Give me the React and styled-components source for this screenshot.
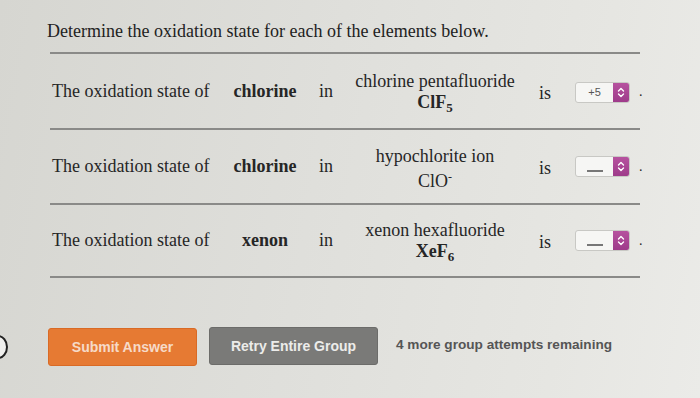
import styled, { createGlobalStyle } from "styled-components";

const GlobalStyle = createGlobalStyle`
  html, body {
    margin: 0;
    padding: 0;
  }
  body {
    width: 700px;
    height: 398px;
    overflow: hidden;
    background: linear-gradient(100deg, #d6d6d1 0%, #dfdfdb 45%, #e6e6e2 80%, #ebebe8 100%);
    font-family: "Liberation Serif", "Times New Roman", serif;
    color: #262626;
  }
`;

const Page = styled.div`
  position: relative;
  height: 398px;
  padding: 20px 0 0 47px;
  box-sizing: border-box;
`;

const Heading = styled.div`
  font-size: 18px;
  line-height: 22px;
  color: #222;
  padding-bottom: 10px;
`;

const Rule = styled.div`
  width: 590px;
  height: 2px;
  margin-left: 3px;
  background: #8a8a88;
`;

const Row = styled.div`
  display: grid;
  grid-template-columns: 166px 94px 28px 190px 30px auto;
  align-items: center;
  height: ${(p) => p.h || 74}px;
  padding-left: 5px;
  font-size: 18px;
`;

const Cell = styled.div`
  text-align: ${(p) => (p.left ? "left" : "center")};
  font-weight: ${(p) => (p.bold ? 700 : 400)};
  transform: translateY(${(p) => p.dy || 0}px);
`;

const Compound = styled.div`
  text-align: center;
  line-height: 21px;
  transform: translateY(${(p) => p.dy || 0}px);
`;

const Formula = styled.div`
  font-weight: ${(p) => (p.bold ? 700 : 400)};
  margin-top: ${(p) => p.gap || 0}px;
`;

const Sub = styled.sub`
  font-size: 13px;
  vertical-align: -4px;
  line-height: 0;
`;

const Sup = styled.sup`
  font-size: 12px;
  vertical-align: 6px;
  line-height: 0;
`;

const SelectWrap = styled.div`
  display: flex;
  align-items: center;
  margin-left: 15px;
  transform: translateY(${(p) => p.dy || 0}px);
`;

const Select = styled.div`
  display: flex;
  width: 53px;
  height: 19px;
  border: 1px solid #c8c8c4;
  border-radius: 3px;
  background: #f6f6f4;
  overflow: hidden;
`;

const SelectValue = styled.div`
  flex: 1;
  display: flex;
  align-items: center;
  justify-content: center;
  font-family: "Liberation Sans", Arial, sans-serif;
  font-size: 11px;
  color: #555;
`;

const Blank = styled.div`
  width: 16px;
  height: 2px;
  background: #777;
  margin-top: 8px;
`;

const Arrows = styled.div`
  width: 16px;
  display: flex;
  align-items: center;
  justify-content: center;
  background: linear-gradient(#b6529f, #9e3b8a);
`;

const Period = styled.span`
  margin-left: 9px;
  font-size: 14px;
`;

const Actions = styled.div`
  display: flex;
  align-items: center;
  margin-top: 50px;
  margin-left: 1px;
`;

const Button = styled.div`
  width: ${(p) => p.w}px;
  height: 38px;
  box-sizing: border-box;
  display: flex;
  align-items: center;
  justify-content: center;
  border-radius: 3px;
  font-family: "Liberation Sans", Arial, sans-serif;
  font-weight: 700;
  font-size: 14px;
  background: ${(p) => p.bg};
  color: ${(p) => p.fg};
  border: 1px solid ${(p) => p.edge};
  margin-right: 12px;
  transform: translateY(${(p) => p.dy || 0}px);
`;

const Remaining = styled.div`
  margin-left: 6px;
  font-family: "Liberation Sans", Arial, sans-serif;
  font-weight: 700;
  font-size: 13.6px;
  color: #555;
  transform: translateY(-3px);
`;

const EdgeKnob = styled.div`
  position: absolute;
  left: -12px;
  top: 335px;
  width: 16px;
  height: 20px;
  border-radius: 50%;
  border: 2px solid #222;
  background: #f0f0ee;
`;

const Chevrons = () => (
  <svg width="8" height="11" viewBox="0 0 8 11">
    <path d="M1.5 4 L4 1.5 L6.5 4 M1.5 7 L4 9.5 L6.5 7" fill="none" stroke="#fff" strokeWidth="1.4" strokeLinecap="round" strokeLinejoin="round" />
  </svg>
);

const Dropdown = ({ value, dy }) => (
  <SelectWrap dy={dy}>
    <Select>
      <SelectValue>{value ? value : <Blank />}</SelectValue>
      <Arrows>
        <Chevrons />
      </Arrows>
    </Select>
    <Period>.</Period>
  </SelectWrap>
);

const rows = [
  { element: "chlorine", name: "chlorine pentafluoride", formula: <>ClF<Sub>5</Sub></>, bold: true, value: "+5", gap: 0, h: 74, dy: 1 },
  { element: "chlorine", name: "hypochlorite ion", formula: <>ClO<Sup>-</Sup></>, bold: false, gap: 4, h: 73, dy: 2 },
  { element: "xenon", name: "xenon hexafluoride", formula: <>XeF<Sub>6</Sub></>, bold: true, gap: 0, h: 71, dy: 0 },
];

const App = () => {
  return (
    <>
      <GlobalStyle />
      <Page>
        <Heading>Determine the oxidation state for each of the elements below.</Heading>
        <Rule />
        {rows.map((r, i) => (
          <div key={i}>
            <Row h={r.h}>
              <Cell left>The oxidation state of</Cell>
              <Cell bold>{r.element}</Cell>
              <Cell>in</Cell>
              <Compound dy={r.dy}>
                <div>{r.name}</div>
                <Formula bold={r.bold} gap={r.gap}>{r.formula}</Formula>
              </Compound>
              <Cell dy={2}>is</Cell>
              <Dropdown value={r.value} dy={i === 0 ? 1 : 0} />
            </Row>
            <Rule />
          </div>
        ))}
        <Actions>
          <Button w={149} bg="#e67a33" fg="#f6dac8" edge="#d96a25">Submit Answer</Button>
          <Button w={169} bg="#7a7a78" fg="#ececea" edge="#6c6c6a" dy={-1}>Retry Entire Group</Button>
          <Remaining>4 more group attempts remaining</Remaining>
        </Actions>
        <EdgeKnob />
      </Page>
    </>
  );
};

export default App;
